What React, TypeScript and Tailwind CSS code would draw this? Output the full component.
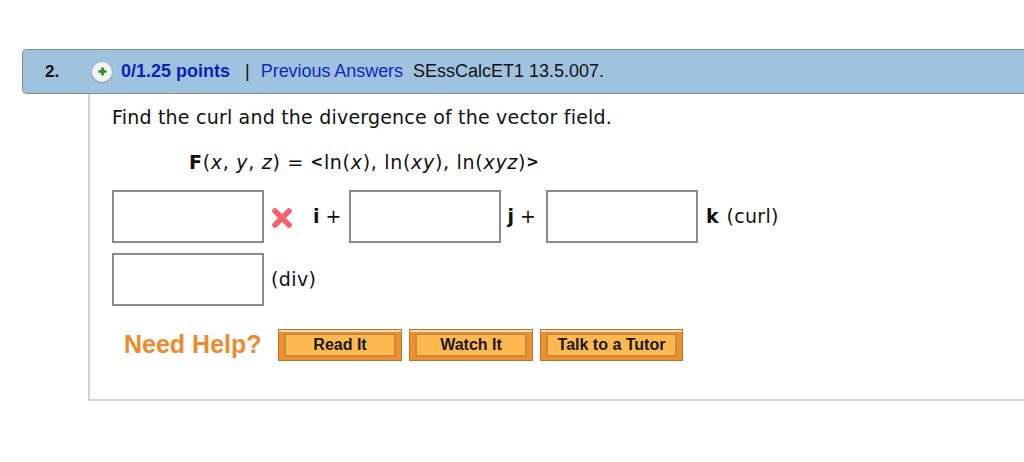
export default function App() {
  const serif = "font-['DejaVu_Sans',sans-serif]";
  const box = "w-[152px] h-[53px] border-2 border-[#8a8a8a] bg-white shrink-0";
  const btn = "h-[32px] border border-[#b0783c] bg-[#f0902c] flex px-[5px] pt-[3px] pb-[3px] shadow-[inset_0_2px_0_#f9d3a8]";
  const btnIn = "flex-1 border-2 border-[#c98a3e] bg-[#fdb94f] flex items-center justify-center pt-[1px] text-[16px] font-bold text-[#1a1a1a] font-['Liberation_Sans',sans-serif]";
  return (
    <div className={`w-[1024px] h-[462px] bg-white overflow-hidden pt-[49px] ${serif} text-[#111]`}>
      <div className="ml-[22px] h-[45px] bg-[#9fc2de] border border-[#7c8d9e] border-r-0 rounded-l-[5px] flex items-center font-['Liberation_Sans',sans-serif] text-[18px] whitespace-nowrap">
        <span className="ml-[22px] w-[47px] font-bold text-[17px] text-[#111]">2.</span>
        <span className="w-[20px] h-[20px] rounded-full bg-[#f2f2f2] shadow-[0_1px_2px_#8899aa] flex items-center justify-center">
          <svg width="11" height="11" viewBox="0 0 11 11"><path d="M5.5 1.5v8M1.5 5.5h8" stroke="#1f8f1f" strokeWidth="2.6" /></svg>
        </span>
        <span className="ml-[9px] font-bold text-[#0f1fb5]">0/1.25 points</span>
        <span className="ml-[15px] text-[#111]">|</span>
        <span className="ml-[11px] tracking-[-0.05px] text-[#1226c4]">Previous Answers</span>
        <span className="ml-[10px] text-[#111]">SEssCalcET1 13.5.007.</span>
      </div>
      <div className="ml-[88px] h-[307px] border-l-2 border-b-2 border-[#d2d2d2] pl-[22px] flex flex-col">
        <p className="mt-[11px] h-[24px] text-[19px] leading-[24px] tracking-[0.2px] whitespace-nowrap">Find the curl and the divergence of the vector field.</p>
        <p className="mt-[21px] ml-[77px] h-[24px] text-[19px] leading-[24px] tracking-[0.7px] whitespace-nowrap">
          <b>F</b>(<i>x</i>, <i>y</i>, <i>z</i>) = <b className="text-[15px] align-[2px]">&lt;</b>ln(<i>x</i>), ln(<i>xy</i>), ln(<i>xyz</i>)<b className="text-[15px] align-[2px]">&gt;</b>
        </p>
        <div className="mt-[16px] flex items-center h-[53px] text-[19px] whitespace-nowrap">
          <div className={box} />
          <svg className="ml-[7px] mt-[3px]" width="22" height="22" viewBox="0 0 22 22"><path d="M4 4l14 14M18 4L4 18" stroke="#f4626c" strokeWidth="5.5" strokeLinecap="round" /></svg>
          <b className="ml-[20px]">i</b>
          <span className="ml-[6px]">+</span>
          <div className={`${box} ml-[8px]`} />
          <b className="ml-[6px]">j</b>
          <span className="ml-[6px]">+</span>
          <div className={`${box} ml-[10px]`} />
          <b className="ml-[8px]">k</b>
          <span className="ml-[8px] tracking-[0.3px]">(curl)</span>
        </div>
        <div className="mt-[10px] flex items-center h-[53px] text-[19px]">
          <div className={box} />
          <span className="ml-[7px] tracking-[0.4px]">(div)</span>
        </div>
        <div className="mt-[20px] ml-[12px] flex items-center font-['Liberation_Sans',sans-serif]">
          <span className="text-[25px] font-bold text-[#ee8a2d] w-[154px]">Need Help?</span>
          <div className={`${btn} w-[124px]`}><div className={btnIn}>Read It</div></div>
          <div className={`${btn} w-[124px] ml-[7px]`}><div className={btnIn}>Watch It</div></div>
          <div className={`${btn} w-[143px] ml-[7px]`}><div className={btnIn}>Talk to a Tutor</div></div>
        </div>
      </div>
    </div>
  );
}
